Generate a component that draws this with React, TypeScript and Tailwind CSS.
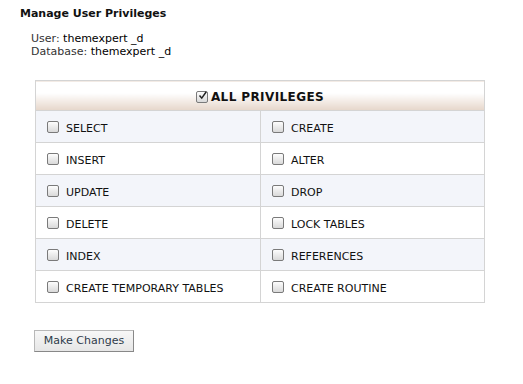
import { useState } from "react"

const rows: [string, string][] = [
  ["SELECT", "CREATE"],
  ["INSERT", "ALTER"],
  ["UPDATE", "DROP"],
  ["DELETE", "LOCK TABLES"],
  ["INDEX", "REFERENCES"],
  ["CREATE TEMPORARY TABLES", "CREATE ROUTINE"],
]

function Box({ checked, onClick }: { checked: boolean; onClick: () => void }) {
  return (
    <span
      onClick={onClick}
      className="inline-flex h-[12px] w-[12px] shrink-0 items-center justify-center rounded-[2px] border border-[#7a7a7a] bg-gradient-to-b from-[#fdfdfd] to-[#d9d9d9]"
    >
      {checked && (
        <svg viewBox="0 0 12 12" className="h-[13px] w-[13px] -mt-[3px] ml-[1px]">
          <path d="M2 6 L5 9.5 L11 1" fill="none" stroke="#222" strokeWidth="2" />
        </svg>
      )}
    </span>
  )
}

export default function App() {
  const [all, setAll] = useState(true)
  const [checks, setChecks] = useState<Record<string, boolean>>({})
  const toggle = (k: string) => setChecks((c) => ({ ...c, [k]: !c[k] }))

  return (
    <div className="h-[384px] w-[523px] bg-white pl-[20px] pt-[7px] text-[#111] font-['DejaVu_Sans',Verdana,sans-serif]">
      <h1 className="text-[11px] font-bold leading-[14px]">Manage User Privileges</h1>

      <div className="mt-[11px] pl-[11px] text-[11px] leading-[13px] text-[#333]">
        <div>User: <span className="text-black">themexpert _d</span></div>
        <div>Database: <span className="text-black">themexpert _d</span></div>
      </div>

      <table className="ml-[15px] mt-[22px] w-[450px] border-collapse border border-[#d4d4d4] text-[11px]">
        <thead>
          <tr>
            <th
              colSpan={2}
              className="h-[30px] bg-gradient-to-b from-white from-40% to-[#e6d6ca] text-center text-[12px] font-bold tracking-[0.4px]"
            >
              <span className="inline-flex items-center gap-[3px] pt-[4px]">
                <Box checked={all} onClick={() => setAll(!all)} />
                ALL PRIVILEGES
              </span>
            </th>
          </tr>
        </thead>
        <tbody>
          {rows.map(([a, b], i) => (
            <tr key={a} className={i % 2 === 0 ? "bg-[#f3f5fa]" : "bg-white"}>
              {[a, b].map((name, j) => (
                <td
                  key={name}
                  className={`h-[32px] border-t border-[#d4d4d4] pl-[11px] ${j === 0 ? "w-[225px] border-r" : ""}`}
                >
                  <label className="flex items-center gap-[7px]">
                    <Box checked={!!checks[name]} onClick={() => toggle(name)} />
                    <span className="pt-[6px]">{name}</span>
                  </label>
                </td>
              ))}
            </tr>
          ))}
        </tbody>
      </table>

      <button
        type="button"
        className="ml-[14px] mt-[27px] h-[22px] w-[100px] border border-[#b8b8b8] border-r-[#888] border-b-[#888] bg-gradient-to-b from-[#f7f7f7] to-[#e6e6e6] text-[11px] text-[#2e3b4a]"
      >
        Make Changes
      </button>
    </div>
  )
}
